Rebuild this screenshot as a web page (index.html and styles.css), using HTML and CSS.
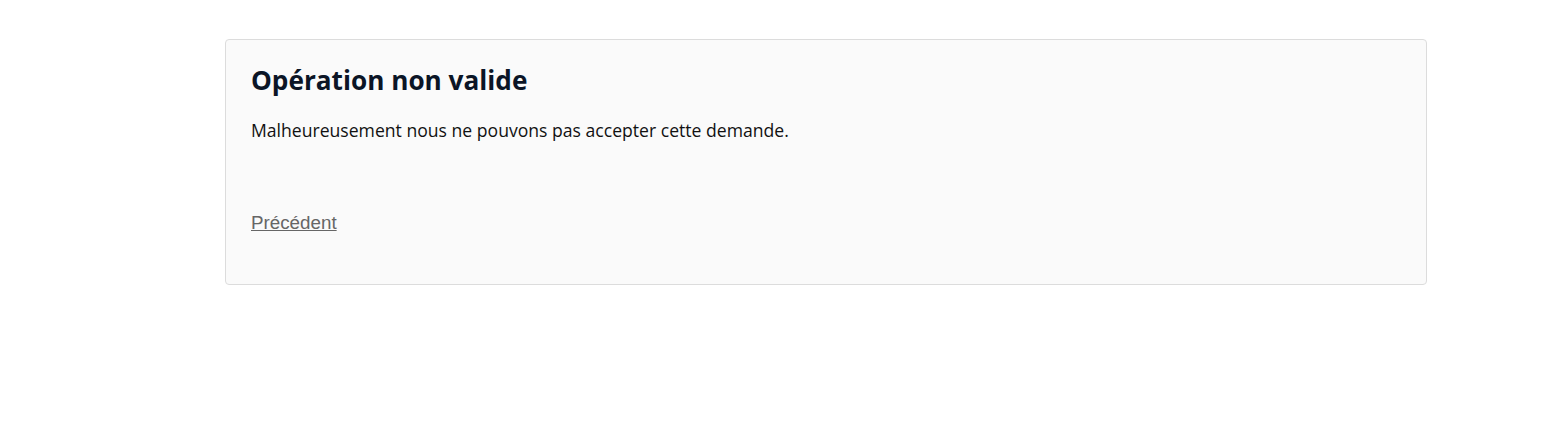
FILE: index.html
```html
<!DOCTYPE html>
<html lang="fr">
<head>
    <meta charset="UTF-8">
    <title>Opération non valide</title>
    <link rel="stylesheet" href="styles.css">
</head>
<body>
    <div class="page">
        <div class="error-box">
            <h1>Opération non valide</h1>
            <p class="message">Malheureusement nous ne pouvons pas accepter cette demande.</p>
            <a class="back-link" href="#">Précédent</a>
        </div>
    </div>
</body>
</html>
```

FILE: styles.css
```css
* {
    margin: 0;
    padding: 0;
    box-sizing: border-box;
}

body {
    background: #fff;
    font-family: 'Open Sans', 'Noto Sans', sans-serif;
    color: #0b1526;
}

.page {
    padding: 39px 139px 0 225px;
}

.error-box {
    background: #fafafa;
    border: 1px solid #dcdcdc;
    border-radius: 4px;
    padding: 22px 25px 50px;
    min-height: 246px;
}

h1 {
    font-size: 26.2px;
    font-weight: 700;
    color: #0b1526;
    line-height: 36px;
}

.message {
    font-size: 17.6px;
    line-height: 24px;
    margin-top: 20px;
    color: #111;
}

.back-link {
    display: inline-block;
    margin-top: 70px;
    font-family: 'Liberation Sans', Arial, sans-serif;
    font-size: 18.8px;
    color: #666;
    text-decoration: underline;
}
```
